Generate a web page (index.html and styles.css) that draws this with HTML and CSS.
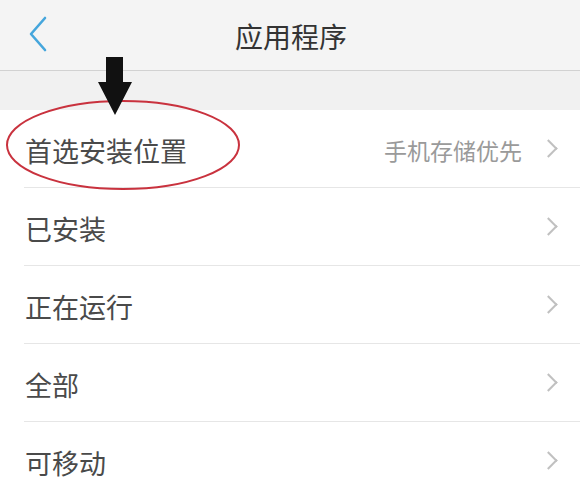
FILE: index.html
```html
<!doctype html>
<html>
<head>
<meta charset="utf-8">
<title>应用程序</title>
<link rel="stylesheet" href="styles.css">
</head>
<body>

<div class="screen">
	<header class="topbar">
		<svg class="back" width="20" height="36" viewBox="0 0 20 36">
			<polyline points="17,2 3,18 17,34" fill="none" stroke="#45a6dc" stroke-width="2.6" stroke-linecap="round" stroke-linejoin="round"/>
		</svg>
		<h1 class="title">应用程序</h1>
	</header>

	<div class="gap"></div>

	<ul class="list">
		<li class="row">
			<span class="label">首选安装位置</span>
			<span class="value">手机存储优先</span>
			<span class="chev"></span>
		</li>
		<li class="row">
			<span class="label">已安装</span>
			<span class="chev"></span>
		</li>
		<li class="row">
			<span class="label">正在运行</span>
			<span class="chev"></span>
		</li>
		<li class="row">
			<span class="label">全部</span>
			<span class="chev"></span>
		</li>
		<li class="row">
			<span class="label">可移动</span>
			<span class="chev"></span>
		</li>
	</ul>

	<!-- annotation drawn over the screenshot -->
	<svg class="mark" width="260" height="200" viewBox="0 0 260 200">
		<ellipse cx="123" cy="145" rx="116" ry="44" fill="none" stroke="#c9323e" stroke-width="2"/>
		<polygon points="106,57 123,57 123,82 132,82 115,115 98,82 106,82" fill="#111"/>
	</svg>
</div>

</body>
</html>
```

FILE: styles.css
```css
html, body {
	margin: 0;
	padding: 0;
}

body {
	font-family: "Noto Sans CJK SC", "Noto Sans", sans-serif;
	background: #ffffff;
}

.screen {
	position: relative;
	width: 580px;
	height: 484px;
	overflow: hidden;
}

.topbar {
	position: relative;
	height: 70px;
	display: flex;
	align-items: center;
	justify-content: center;
	background: #f4f4f4;
	border-bottom: 1px solid #d2d2d2;
}

.back {
	position: absolute;
	left: 28px;
	top: 16px;
}

.title {
	margin: 0;
	font-size: 28px;
	font-weight: normal;
	color: #333333;
	padding-left: 2px;
	padding-top: 2px;
}

.gap {
	height: 39px;
	background: #f1f1f1;
}

.list {
	list-style: none;
	margin: 0;
	padding: 0 0 0 24px;
	background: #ffffff;
}

.row {
	display: flex;
	align-items: center;
	height: 77px;
	border-bottom: 1px solid #e6e6e6;
	padding-right: 21px;
}

.label {
	flex: 1;
	font-size: 27px;
	color: #4a4a4a;
	padding-left: 1px;
	padding-top: 3px;
}

.value {
	font-size: 23px;
	color: #9a9a9a;
	margin-right: 20px;
	padding-top: 2px;
}

.chev {
	width: 11px;
	height: 11px;
	border-top: 2px solid #c0c0c0;
	border-right: 2px solid #c0c0c0;
	transform: rotate(45deg);
	margin-right: 4px;
}

.mark {
	position: absolute;
	left: 0;
	top: 0;
}
```
